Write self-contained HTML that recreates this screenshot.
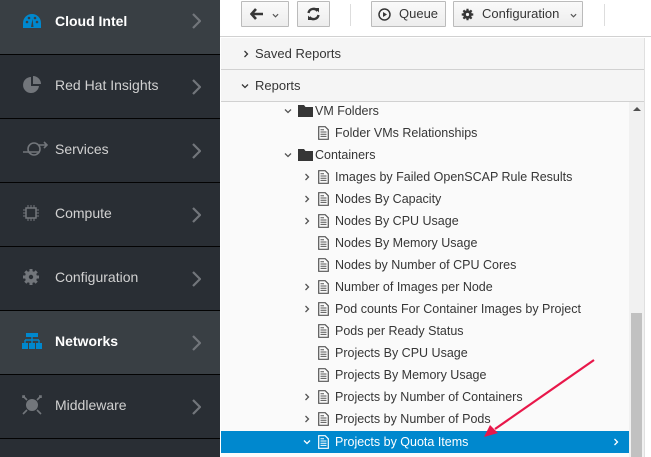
<!DOCTYPE html><html><head><style>
*{margin:0;padding:0;box-sizing:border-box}
body{width:651px;height:457px;overflow:hidden;background:#fff;font-family:"Liberation Sans",sans-serif;position:relative}
#side{position:absolute;left:0;top:0;width:220px;height:457px;background:#292e34}
.it{position:absolute;left:0;width:220px;height:63px;color:#d1d1d1;font-size:14px;border-bottom:1px solid #030303}
.it.a{background:#393f44;color:#fff;font-weight:bold}
.it span.t{position:absolute;left:55px;top:50%;transform:translateY(-50%);margin-top:-2px}
.it svg.ic{position:absolute;left:22px;top:50%;transform:translateY(-50%);margin-top:-2px}
.it svg.ch{position:absolute;left:191px;top:50%;margin-top:-9px}
.btn{position:absolute;top:1px;height:26px;border:1px solid #bbb;border-radius:1px;background:linear-gradient(#fafafa,#ededed);font-size:13px;color:#363636;line-height:24px}
.hdr{position:absolute;left:221px;width:423px;height:32px;background:#f5f5f5;border-bottom:1px solid #d1d1d1;font-size:13px;color:#363636;line-height:31px}
.row{position:absolute;height:22px;font-size:12.5px;color:#363636;line-height:22px;white-space:nowrap}
.row svg{position:absolute}
</style></head><body>
<svg width="0" height="0" style="position:absolute"><defs>
<symbol id="file" viewBox="0 0 11 14"><path d="M.7.7h6.5l3.1 3.1v9.5H.7z" fill="none" stroke="currentColor" stroke-width="1.2"/><path d="M2.5 6h6M2.5 8.2h6M2.5 10.4h6M2.5 3.8h3.5" stroke="currentColor" stroke-width="1"/></symbol>
<symbol id="cr" viewBox="0 0 8 8"><path d="M2.5 1l3 3-3 3" fill="none" stroke="currentColor" stroke-width="1.3"/></symbol>
<symbol id="cd" viewBox="0 0 8 8"><path d="M1 2.5l3 3 3-3" fill="none" stroke="currentColor" stroke-width="1.3"/></symbol>
<symbol id="fold" viewBox="0 0 15 12"><path d="M0 0h6l1.5 2H15v10H0z" fill="#363636"/></symbol>
<symbol id="sch" viewBox="0 0 10 18"><path d="M2 2l7 7-7 7" fill="none" stroke="#72767b" stroke-width="2.2"/></symbol>
</defs></svg>
<div id="side">
<div class="it a" style="top:0;height:55px"><svg class="ic" style="margin-top:-6px" width="20" height="16" viewBox="0 0 20 16"><path d="M10 1A9 9 0 0 0 1 10v5h18v-5A9 9 0 0 0 10 1z" fill="#0088ce"/><circle cx="5" cy="9" r="1.3" fill="#393f44"/><circle cx="7" cy="5" r="1.3" fill="#393f44"/><circle cx="13" cy="5" r="1.3" fill="#393f44"/><circle cx="15" cy="9" r="1.3" fill="#393f44"/><path d="M9 14l1.5-8 1 8z" fill="#393f44"/></svg><span class="t" style="margin-top:-6px">Cloud Intel</span><svg class="ch" style="margin-top:-15px" width="10" height="18"><use href="#sch"/></svg></div>
<div class="it" style="top:55px;height:64px"><svg class="ic" width="20" height="18" viewBox="0 0 20 18"><path d="M9 1a8 8 0 1 0 8 9H9z" fill="#72767b"/><path d="M11 0v8h8a8 8 0 0 0-8-8z" fill="#72767b"/></svg><span class="t">Red Hat Insights</span><svg class="ch" width="10" height="18"><use href="#sch"/></svg></div>
<div class="it" style="top:119px;height:64px"><svg class="ic" width="26" height="18" viewBox="0 0 26 18"><circle cx="12" cy="9" r="6" fill="none" stroke="#72767b" stroke-width="1.6"/><path d="M1 12h16M17 5h8M22 2l3 3-3 3" fill="none" stroke="#72767b" stroke-width="1.6"/></svg><span class="t">Services</span><svg class="ch" width="10" height="18"><use href="#sch"/></svg></div>
<div class="it" style="top:183px;height:64px"><svg class="ic" width="18" height="18" viewBox="0 0 18 18"><rect x="4" y="4" width="10" height="10" fill="none" stroke="#72767b" stroke-width="1.5"/><path d="M6 1v3M9 1v3M12 1v3M6 14v3M9 14v3M12 14v3M1 6h3M1 9h3M1 12h3M14 6h3M14 9h3M14 12h3" stroke="#72767b"/></svg><span class="t">Compute</span><svg class="ch" width="10" height="18"><use href="#sch"/></svg></div>
<div class="it" style="top:247px;height:64px"><svg class="ic" width="18" height="18" viewBox="0 0 18 18"><circle cx="9" cy="9" r="6" fill="#72767b"/><path d="M9 1v16M1 9h16M3.3 3.3l11.4 11.4M14.7 3.3L3.3 14.7" stroke="#72767b" stroke-width="3"/><circle cx="9" cy="9" r="2.2" fill="#292e34"/></svg><span class="t">Configuration</span><svg class="ch" width="10" height="18"><use href="#sch"/></svg></div>
<div class="it a" style="top:311px;height:64px"><svg class="ic" width="20" height="18" viewBox="0 0 20 18"><rect x="4" y="1" width="12" height="4" fill="#0088ce"/><path d="M10 5v3M3 8h14M3 8v3M10 8v3M17 8v3" stroke="#0088ce" stroke-width="1.4" fill="none"/><rect x="0" y="11" width="6" height="6" fill="#0088ce"/><rect x="7" y="11" width="6" height="6" fill="#0088ce"/><rect x="14" y="11" width="6" height="6" fill="#0088ce"/></svg><span class="t">Networks</span><svg class="ch" width="10" height="18"><use href="#sch"/></svg></div>
<div class="it" style="top:375px;height:64px"><svg class="ic" width="20" height="20" viewBox="0 0 20 20"><circle cx="10" cy="10" r="6" fill="#72767b"/><path d="M1 1l4 4M19 1l-4 4M1 19l4-4M19 19l-4-4M1 3v-2h2M19 3v-2h-2" stroke="#72767b" stroke-width="1.6" fill="none"/></svg><span class="t">Middleware</span><svg class="ch" width="10" height="18"><use href="#sch"/></svg></div>
</div>
<div style="position:absolute;left:220px;top:0;width:431px;height:37px;background:#fff;border-bottom:1px solid #d1d1d1"></div>
<div class="btn" style="left:241px;width:48px"><svg style="position:absolute;left:8px;top:6px" width="14" height="12" viewBox="0 0 14 12"><path d="M6 1L1.5 6 6 11M2 6h11" fill="none" stroke="#363636" stroke-width="2.6"/></svg><svg style="position:absolute;left:30px;top:10px;color:#555" width="7" height="7"><use href="#cd"/></svg></div>
<div class="btn" style="left:297px;width:33px"><svg style="position:absolute;left:8px;top:5px" width="15" height="14" viewBox="0 0 15 14"><path d="M2.5 6A5 5 0 0 1 11.5 4M12.5 8A5 5 0 0 1 3.5 10" fill="none" stroke="#363636" stroke-width="2.4"/><path d="M9 1h4v4.5z M6 13H2V8.5z" fill="#363636"/></svg></div>
<div style="position:absolute;left:350px;top:4px;width:1px;height:22px;background:#ddd"></div>
<div class="btn" style="left:371px;width:75px"><svg style="position:absolute;left:6px;top:6px" width="13" height="13" viewBox="0 0 13 13"><circle cx="6.5" cy="6.5" r="5.5" fill="none" stroke="#363636" stroke-width="1.5"/><path d="M5 4v5l4-2.5z" fill="#363636"/></svg><span style="position:absolute;left:27px">Queue</span></div>
<div class="btn" style="left:453px;width:130px"><svg style="position:absolute;left:7px;top:6px" width="13" height="13" viewBox="0 0 18 18"><circle cx="9" cy="9" r="6" fill="#363636"/><path d="M9 1v16M1 9h16M3.3 3.3l11.4 11.4M14.7 3.3L3.3 14.7" stroke="#363636" stroke-width="3"/><circle cx="9" cy="9" r="2.2" fill="#f3f3f3"/></svg><span style="position:absolute;left:28px">Configuration</span><svg style="position:absolute;left:116px;top:10px;color:#555" width="7" height="7"><use href="#cd"/></svg></div>
<div style="position:absolute;left:604px;top:4px;width:1px;height:22px;background:#ddd"></div>
<div class="hdr" style="top:38px"><svg style="position:absolute;left:21px;top:12px;color:#363636" width="8" height="8"><use href="#cr"/></svg><span style="position:absolute;left:34px">Saved Reports</span></div>
<div class="hdr" style="top:70px"><svg style="position:absolute;left:20px;top:12px;color:#363636" width="8" height="8"><use href="#cd"/></svg><span style="position:absolute;left:34px">Reports</span></div>
<div style="position:absolute;left:221px;top:102px;width:408px;height:355px;background:#fafafa"></div>
<div style="position:absolute;left:629px;top:102px;width:15px;height:355px;background:#f1f1f1"></div>
<div style="position:absolute;left:631px;top:313px;width:11px;height:144px;background:#c1c1c1"></div>
<div style="position:absolute;left:633px;top:107px;border:4px solid transparent;border-bottom:4px solid #505050;border-top:0"></div>
<div style="position:absolute;left:644px;top:38px;width:1px;height:419px;background:#e0e0e0"></div>
<div style="position:absolute;left:221px;top:431px;width:408px;height:22px;background:#0088ce"></div>

<div class="row" style="left:284px;top:100px"><svg style="left:0;top:7px;color:#555" width="8" height="8"><use href="#cd"/></svg><svg style="left:14px;top:5px" width="15" height="12"><use href="#fold"/></svg><span style="position:absolute;left:31px">VM Folders</span></div>
<div class="row" style="left:318px;top:122px"><svg style="left:0;top:4px;color:#555" width="11" height="14"><use href="#file"/></svg><span style="position:absolute;left:17px">Folder VMs Relationships</span></div>
<div class="row" style="left:284px;top:144px"><svg style="left:0;top:7px;color:#555" width="8" height="8"><use href="#cd"/></svg><svg style="left:14px;top:5px" width="15" height="12"><use href="#fold"/></svg><span style="position:absolute;left:31px">Containers</span></div>
<div class="row" style="left:303px;top:166px"><svg style="left:0;top:7px;color:#555" width="8" height="8"><use href="#cr"/></svg><svg style="left:15px;top:4px;color:#555" width="11" height="14"><use href="#file"/></svg><span style="position:absolute;left:32px">Images by Failed OpenSCAP Rule Results</span></div>
<div class="row" style="left:303px;top:188px"><svg style="left:0;top:7px;color:#555" width="8" height="8"><use href="#cr"/></svg><svg style="left:15px;top:4px;color:#555" width="11" height="14"><use href="#file"/></svg><span style="position:absolute;left:32px">Nodes By Capacity</span></div>
<div class="row" style="left:303px;top:210px"><svg style="left:0;top:7px;color:#555" width="8" height="8"><use href="#cr"/></svg><svg style="left:15px;top:4px;color:#555" width="11" height="14"><use href="#file"/></svg><span style="position:absolute;left:32px">Nodes By CPU Usage</span></div>
<div class="row" style="left:303px;top:232px"><svg style="left:15px;top:4px;color:#555" width="11" height="14"><use href="#file"/></svg><span style="position:absolute;left:32px">Nodes By Memory Usage</span></div>
<div class="row" style="left:303px;top:254px"><svg style="left:15px;top:4px;color:#555" width="11" height="14"><use href="#file"/></svg><span style="position:absolute;left:32px">Nodes by Number of CPU Cores</span></div>
<div class="row" style="left:303px;top:276px"><svg style="left:0;top:7px;color:#555" width="8" height="8"><use href="#cr"/></svg><svg style="left:15px;top:4px;color:#555" width="11" height="14"><use href="#file"/></svg><span style="position:absolute;left:32px">Number of Images per Node</span></div>
<div class="row" style="left:303px;top:298px"><svg style="left:0;top:7px;color:#555" width="8" height="8"><use href="#cr"/></svg><svg style="left:15px;top:4px;color:#555" width="11" height="14"><use href="#file"/></svg><span style="position:absolute;left:32px">Pod counts For Container Images by Project</span></div>
<div class="row" style="left:303px;top:320px"><svg style="left:15px;top:4px;color:#555" width="11" height="14"><use href="#file"/></svg><span style="position:absolute;left:32px">Pods per Ready Status</span></div>
<div class="row" style="left:303px;top:342px"><svg style="left:15px;top:4px;color:#555" width="11" height="14"><use href="#file"/></svg><span style="position:absolute;left:32px">Projects By CPU Usage</span></div>
<div class="row" style="left:303px;top:364px"><svg style="left:15px;top:4px;color:#555" width="11" height="14"><use href="#file"/></svg><span style="position:absolute;left:32px">Projects By Memory Usage</span></div>
<div class="row" style="left:303px;top:386px"><svg style="left:0;top:7px;color:#555" width="8" height="8"><use href="#cr"/></svg><svg style="left:15px;top:4px;color:#555" width="11" height="14"><use href="#file"/></svg><span style="position:absolute;left:32px">Projects by Number of Containers</span></div>
<div class="row" style="left:303px;top:408px"><svg style="left:0;top:7px;color:#555" width="8" height="8"><use href="#cr"/></svg><svg style="left:15px;top:4px;color:#555" width="11" height="14"><use href="#file"/></svg><span style="position:absolute;left:32px">Projects by Number of Pods</span></div>
<div class="row" style="left:303px;top:431px;color:#fff"><svg style="left:0;top:7px;color:#fff" width="8" height="8"><use href="#cd"/></svg><svg style="left:15px;top:4px;color:#fff" width="11" height="14"><use href="#file"/></svg><span style="position:absolute;left:32px">Projects by Quota Items</span><svg style="left:309px;top:7px;color:#fff" width="8" height="8"><use href="#cr"/></svg></div>
<svg style="position:absolute;left:0;top:0" width="651" height="457"><path d="M594 360L495 429" stroke="#e8174a" stroke-width="2.2"/><path d="M484 437l6-12 8 8z" fill="#e8174a"/></svg>
</body></html>
